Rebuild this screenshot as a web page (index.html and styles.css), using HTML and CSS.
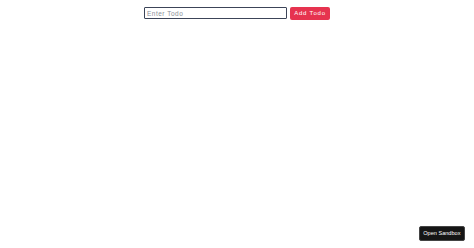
FILE: index.html
```html
<!DOCTYPE html>
<html>
<head>
<meta charset="utf-8">
<link rel="stylesheet" href="styles.css">
</head>
<body>
<div class="app">
  <form class="todo-form">
    <input class="todo-input" type="text" placeholder="Enter Todo">
    <button class="todo-btn" type="button">Add Todo</button>
  </form>
</div>
<a class="sandbox-btn">Open Sandbox</a>
</body>
</html>
```
FILE: styles.css
```css
html, body {
  margin: 0;
  padding: 0;
  background: #fff;
  font-family: "Liberation Sans", Arial, sans-serif;
}
.app {
  display: flex;
  justify-content: center;
  padding-top: 6.5px;
}
.todo-form {
  display: flex;
  align-items: center;
  gap: 3px;
  margin: 0;
}
.todo-input {
  box-sizing: border-box;
  width: 143px;
  height: 12.5px;
  border: 1.5px solid #3c4458;
  border-radius: 1px;
  padding: 0 2px;
  font-family: "Liberation Sans", Arial, sans-serif;
  font-size: 6.5px;
  letter-spacing: 0.5px;
  outline: none;
}
.todo-input::placeholder {
  color: #8a8f99;
}
.todo-btn {
  box-sizing: border-box;
  height: 13px;
  width: 40px;
  border: none;
  border-radius: 2px;
  background: #e6334f;
  color: #fff;
  font-family: "Liberation Sans", Arial, sans-serif;
  font-size: 6px;
  letter-spacing: 0.8px;
  padding: 0;
}
.sandbox-btn {
  position: fixed;
  right: 9px;
  bottom: 7px;
  background: #151515;
  color: #fff;
  font-size: 5.6px;
  line-height: 7px;
  padding: 3px 3.5px;
  border-radius: 2px;
  border: 0.5px solid #444;
}
```
